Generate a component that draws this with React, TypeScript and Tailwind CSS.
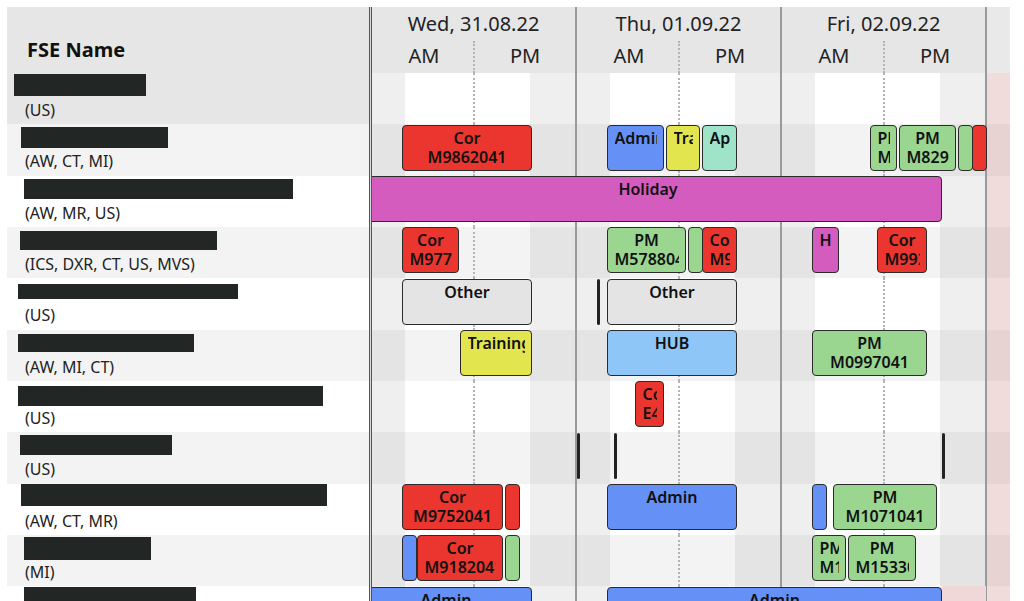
import React from 'react';

type Ev = { x: number; r: number; c: string; lines?: string[] };
type Row = {
  name: [number, number, number, number];
  tags: string;
  events: Ev[];
  marks?: number[];
  band?: [number, number];
};

const T0 = 372;

const red = 'bg-[#ea362e]';
const blue = 'bg-[#6590f5]';
const yellow = 'bg-[#e3e54f]';
const teal = 'bg-[#9fe3c9]';
const green = 'bg-[#9ad690]';
const magenta = 'bg-[#d45cbe]';
const sky = 'bg-[#8ec6f8]';
const other = 'bg-[#e4e4e4]';

const days = ['Wed, 31.08.22', 'Thu, 01.09.22', 'Fri, 02.09.22'];

const rows: Row[] = [
  { name: [14, 132, 1, 22], tags: '(US)', events: [] },
  {
    name: [21, 147, 3, 21],
    tags: '(AW, CT, MI)',
    events: [
      { x: 402, r: 532, c: red, lines: ['Cor', 'M9862041'] },
      { x: 607, r: 664, c: blue, lines: ['Admin'] },
      { x: 666, r: 700, c: yellow, lines: ['Training'] },
      { x: 702, r: 737, c: teal, lines: ['Applications'] },
      { x: 870, r: 897, c: green, lines: ['PM', 'M8291041'] },
      { x: 899, r: 956, c: green, lines: ['PM', 'M8291041'] },
      { x: 958, r: 970, c: green },
      { x: 972, r: 985, c: red },
    ],
  },
  {
    name: [24, 269, 3, 20],
    tags: '(AW, MR, US)',
    events: [{ x: 354, r: 942, c: magenta, lines: ['Holiday'] }],
  },
  {
    name: [20, 197, 4, 19],
    tags: '(ICS, DXR, CT, US, MVS)',
    events: [
      { x: 402, r: 459, c: red, lines: ['Cor', 'M9771041'] },
      { x: 607, r: 686, c: green, lines: ['PM', 'M5788041'] },
      { x: 688, r: 700, c: green },
      { x: 702, r: 737, c: red, lines: ['Cor', 'M9921041'] },
      { x: 812, r: 839, c: magenta, lines: ['Holiday'] },
      { x: 877, r: 927, c: red, lines: ['Cor', 'M9921041'] },
    ],
  },
  {
    name: [18, 220, 6, 15],
    tags: '(US)',
    events: [
      { x: 402, r: 532, c: other, lines: ['Other'] },
      { x: 607, r: 737, c: other, lines: ['Other'] },
    ],
    marks: [597],
  },
  {
    name: [18, 176, 4, 18],
    tags: '(AW, MI, CT)',
    events: [
      { x: 460, r: 532, c: yellow, lines: ['Training'] },
      { x: 607, r: 737, c: sky, lines: ['HUB'] },
      { x: 812, r: 927, c: green, lines: ['PM', 'M0997041'] },
    ],
  },
  {
    name: [18, 305, 5, 20],
    tags: '(US)',
    events: [{ x: 635, r: 664, c: red, lines: ['Cor', 'E4120'] }],
  },
  {
    name: [20, 152, 3, 20],
    tags: '(US)',
    events: [],
    marks: [577, 614, 942],
  },
  {
    name: [21, 306, 0, 22],
    tags: '(AW, CT, MR)',
    events: [
      { x: 402, r: 503, c: red, lines: ['Cor', 'M9752041'] },
      { x: 505, r: 518, c: red },
      { x: 607, r: 737, c: blue, lines: ['Admin'] },
      { x: 812, r: 824, c: blue },
      { x: 833, r: 937, c: green, lines: ['PM', 'M1071041'] },
    ],
  },
  {
    name: [24, 127, 2, 23],
    tags: '(MI)',
    events: [
      { x: 402, r: 414, c: blue },
      { x: 417, r: 503, c: red, lines: ['Cor', 'M9182041'] },
      { x: 505, r: 518, c: green },
      { x: 812, r: 846, c: green, lines: ['PM', 'M1153041'] },
      { x: 848, r: 916, c: green, lines: ['PM', 'M1533041'] },
    ],
  },
  {
    name: [24, 172, 1, 22],
    tags: '',
    events: [
      { x: 360, r: 532, c: blue, lines: ['Admin'] },
      { x: 607, r: 942, c: blue, lines: ['Admin'] },
    ],
    band: [942, 986],
  },
];

function Divider() {
  return <div className="w-[3px] shrink-0 border-x border-[#555] bg-[#d8d8d8]" />;
}

function DayCells({ odd }: { odd: boolean }) {
  const dim = odd ? 'bg-[#e4e4e4]' : 'bg-[#efefef]';
  const lit = odd ? 'bg-[#f3f3f3]' : 'bg-white';
  return (
    <>
      {days.map((d) => (
        <div key={d} className="flex h-full w-[205px] shrink-0">
          <div className={`w-[33px] ${dim}`} />
          <div className={`w-[68px] ${lit}`} />
          <div className={`w-[57px] border-l-2 border-dotted border-[#b4b4b4] ${lit}`} />
          <div className={`w-[45px] ${dim}`} />
          <div className="w-[2px] bg-[#9a9a9a]" />
        </div>
      ))}
    </>
  );
}

function EventBox({ ev }: { ev: Ev }) {
  return (
    <div
      className={`absolute top-[0.5px] h-[46px] rounded-[4px] border-[1.5px] border-[#2b2b2b] px-[6.5px] pt-[3px] ${ev.c}`}
      style={{ left: ev.x - T0, width: ev.r - ev.x }}
    >
      {(ev.lines ?? []).map((l, i) => (
        <div
          key={i}
          className="overflow-hidden whitespace-nowrap text-center text-[16px] leading-[19px] font-semibold text-[#111]"
        >
          {l}
        </div>
      ))}
    </div>
  );
}

export default function App() {
  return (
    <div className="h-[601px] w-[1024px] overflow-hidden bg-white pl-[7px] pt-[7px] font-['Noto_Sans','DejaVu_Sans',sans-serif] text-[#222]">
      {/* Header */}
      <div className="flex h-[66px]">
        <div className="w-[362px] shrink-0 bg-[#e6e6e6] pl-[20px] pt-[31px] text-[20px] leading-[24px] font-bold text-[#111]">
          FSE Name
        </div>
        <Divider />
        <div className="flex bg-[#e6e6e6]">
          {days.map((d) => (
            <div key={d} className="flex w-[205px] shrink-0">
              <div className="flex w-[203px] flex-col">
                <div className="flex h-[34px] items-center justify-center text-[20px]">{d}</div>
                <div className="flex h-[32px]">
                  <div className="flex w-[101px] items-center justify-center pb-[2px] pl-[3px] text-[20px]">AM</div>
                  <div className="w-0 border-l-2 border-dotted border-[#b4b4b4]" />
                  <div className="flex w-[100px] items-center justify-center pb-[2px] text-[20px]">PM</div>
                </div>
              </div>
              <div className="w-[2px] bg-[#9a9a9a]" />
            </div>
          ))}
        </div>
        <div className="w-[23px] shrink-0 bg-[#e9e9e9]" />
      </div>

      {/* Rows */}
      {rows.map((row, i) => {
        const odd = i % 2 === 1;
        const leftBg = i === 0 ? 'bg-[#e6e6e6]' : odd ? 'bg-[#f3f3f3]' : 'bg-white';
        return (
          <div key={i} className="flex h-[51.33px]">
            <div className={`w-[362px] shrink-0 ${leftBg}`}>
              <div className="h-[27px]">
                <div
                  className="bg-[#222624]"
                  style={{
                    marginLeft: row.name[0] - 7,
                    width: row.name[1],
                    height: row.name[3],
                    transform: `translateY(${row.name[2]}px)`,
                  }}
                />
              </div>
              <div className="pl-[18px] text-[16px] leading-[20px]">{row.tags}</div>
            </div>
            <Divider />
            <div className="relative flex w-[615px] shrink-0 overflow-hidden">
              <DayCells odd={odd} />
              {row.band && (
                <div
                  className="absolute inset-y-0 bg-[#f0d8d8]"
                  style={{ left: row.band[0] - T0, width: row.band[1] - row.band[0] }}
                />
              )}
              {row.events.map((ev, j) => (
                <EventBox key={j} ev={ev} />
              ))}
              {(row.marks ?? []).map((m) => (
                <div
                  key={m}
                  className="absolute top-[0.5px] h-[46px] w-[3px] rounded-full bg-[#222]"
                  style={{ left: m - T0 }}
                />
              ))}
            </div>
            <div className={`w-[23px] shrink-0 ${odd ? 'bg-[#e8d3d3]' : 'bg-[#f1dcdc]'}`} />
          </div>
        );
      })}
    </div>
  );
}
